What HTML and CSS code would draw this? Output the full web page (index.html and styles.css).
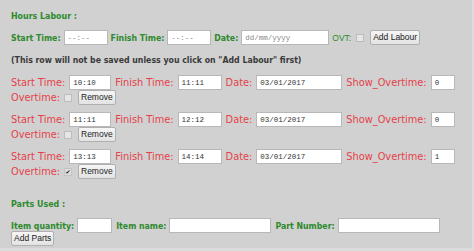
FILE: index.html
```html
<!DOCTYPE html>
<html>
<head>
<meta charset="utf-8">
<link rel="stylesheet" href="styles.css">
</head>
<body>
<div class="panel">
  <div class="heading">Hours Labour :</div>
  <div class="row new-row">
    <span class="g-label">Start Time:</span>
    <input class="inp w44 ph" type="text" value="--:--">
    <span class="g-label">Finish Time:</span>
    <input class="inp w44 ph" type="text" value="--:--">
    <span class="g-label">Date:</span>
    <input class="inp w88 ph" type="text" value="dd/mm/yyyy">
    <span class="ovt">OVT:</span>
    <span class="chk"></span>
    <button class="btn">Add Labour</button>
  </div>
  <div class="note">(This row will not be saved unless you click on "Add Labour" first)</div>

  <div class="entry">
    <div class="row r-line">
      <span class="r-label">Start Time:</span>
      <input class="inp w42 val" type="text" value="10:10">
      <span class="r-label">Finish Time:</span>
      <input class="inp w44 val" type="text" value="11:11">
      <span class="r-label">Date:</span>
      <input class="inp w86 val" type="text" value="03/01/2017">
      <span class="r-label">Show_Overtime:</span>
      <input class="inp w24 val" type="text" value="0">
    </div>
    <div class="row r-line">
      <span class="r-label">Overtime:</span>
      <span class="chk"></span>
      <button class="btn">Remove</button>
    </div>
  </div>

  <div class="entry">
    <div class="row r-line">
      <span class="r-label">Start Time:</span>
      <input class="inp w42 val" type="text" value="11:11">
      <span class="r-label">Finish Time:</span>
      <input class="inp w44 val" type="text" value="12:12">
      <span class="r-label">Date:</span>
      <input class="inp w86 val" type="text" value="03/01/2017">
      <span class="r-label">Show_Overtime:</span>
      <input class="inp w24 val" type="text" value="0">
    </div>
    <div class="row r-line">
      <span class="r-label">Overtime:</span>
      <span class="chk"></span>
      <button class="btn">Remove</button>
    </div>
  </div>

  <div class="entry">
    <div class="row r-line">
      <span class="r-label">Start Time:</span>
      <input class="inp w42 val" type="text" value="13:13">
      <span class="r-label">Finish Time:</span>
      <input class="inp w44 val" type="text" value="14:14">
      <span class="r-label">Date:</span>
      <input class="inp w86 val" type="text" value="03/01/2017">
      <span class="r-label">Show_Overtime:</span>
      <input class="inp w24 val" type="text" value="1">
    </div>
    <div class="row r-line">
      <span class="r-label">Overtime:</span>
      <span class="chk checked">&#10004;</span>
      <button class="btn">Remove</button>
    </div>
  </div>

  <div class="heading parts">Parts Used :</div>
  <div class="row item-row">
    <span class="g-label">Item quantity:</span>
    <input class="inp w35" type="text" value="">
    <span class="g-label">Item name:</span>
    <input class="inp w102" type="text" value="">
    <span class="g-label">Part Number:</span>
    <input class="inp w102" type="text" value="">
  </div>
  <div class="row add-row">
    <button class="btn">Add Parts</button>
  </div>
</div>
</body>
</html>
```
FILE: styles.css
```css
html, body {
  margin: 0;
  padding: 0;
  background: #dcdcdc;
}
.panel {
  width: 472px;
  height: 248px;
  box-sizing: border-box;
  background: #d1d1d1;
  padding: 10px 0 0 11px;
  font-family: "DejaVu Sans", Verdana, sans-serif;
}
.heading {
  font-family: "DejaVu Sans Condensed", "DejaVu Sans", sans-serif;
  font-weight: bold;
  font-size: 8.8px;
  color: #2d8a2d;
  height: 13px;
  line-height: 13px;
}
.row {
  display: flex;
  align-items: center;
}
.new-row {
  margin-top: 7px;
  height: 15px;
}
.g-label {
  font-family: "DejaVu Sans Condensed", "DejaVu Sans", sans-serif;
  font-weight: bold;
  font-size: 8.7px;
  color: #2d8a2d;
  margin-right: 3px;
  white-space: nowrap;
}
.item-row .g-label {
  margin-right: 3px;
}
.item-row .inp {
  margin-right: 4px;
}
.ovt {
  font-family: "Liberation Sans", Arial, sans-serif;
  font-size: 8.5px;
  color: #2d8a2d;
  margin-left: 0;
  margin-right: 5px;
}
.inp {
  flex-shrink: 0;
  box-sizing: border-box;
  height: 15px;
  margin: 0 3px 0 0;
  padding: 0 0 0 3px;
  border: 1px solid #b8b8b8;
  background: #fff;
  font-family: "Liberation Mono", monospace;
  font-size: 7.5px;
  color: #333;
  outline: none;
}
.r-line .inp {
  margin-right: 4px;
}
.ph { color: #888; }
.w24 { width: 24px; }
.w35 { width: 35px; }
.w42 { width: 42px; }
.w44 { width: 44px; }
.w86 { width: 86px; }
.w88 { width: 88px; }
.w102 { width: 102px; }
.chk {
  flex-shrink: 0;
  display: inline-block;
  box-sizing: border-box;
  width: 8px;
  height: 8px;
  border: 1px solid #bdbdbd;
  background: #e6e6e6;
  margin-right: 6px;
  font-size: 7px;
  line-height: 6px;
  text-align: center;
  color: #222;
}
.chk.checked {
  border-color: #c4c4c4;
  background: #dedede;
  font-size: 6px;
}
.btn {
  flex-shrink: 0;
  box-sizing: border-box;
  height: 15px;
  padding: 0 2px;
  border: 1px solid #b0b0b0;
  border-radius: 2px;
  background: linear-gradient(#f6f6f6, #e3e3e3);
  font-family: "Liberation Sans", Arial, sans-serif;
  font-size: 8.5px;
  color: #222;
  line-height: 13px;
}
.note {
  font-family: "DejaVu Sans Condensed", "DejaVu Sans", sans-serif;
  font-weight: bold;
  font-size: 8.7px;
  color: #3a3a3a;
  margin-top: 9px;
  height: 13px;
  line-height: 13px;
}
.entry {
  margin-top: 8px;
}
.entry + .entry {
  margin-top: 7px;
}
.r-line {
  height: 15px;
}
.r-label {
  font-size: 9.8px;
  color: #e5414a;
  margin-right: 4px;
  white-space: nowrap;
}
.parts {
  margin-top: 19px;
}
.item-row {
  margin-top: 7px;
  height: 15px;
}
.add-row {
  margin-top: -2px;
}
```
